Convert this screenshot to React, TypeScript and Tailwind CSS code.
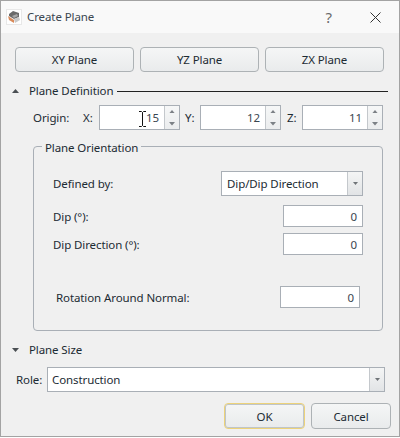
const font = { fontFamily: '"Noto Sans", sans-serif' };

function Arrow({ up, color = "#5f6468", w = 4 }: { up?: boolean; color?: string; w?: number }) {
  return (
    <svg width={w * 2 + 1} height={w + 1} viewBox={`0 0 ${w * 2 + 1} ${w + 1}`} className="block">
      <path d={up ? `M0 ${w + 1}L${w + 0.5} 0L${w * 2 + 1} ${w + 1}Z` : `M0 0L${w + 0.5} ${w + 1}L${w * 2 + 1} 0Z`} fill={color} />
    </svg>
  );
}

function Btn({ children, w, extra = "", h = "h-[25px]" }: { children: string; w: string; extra?: string; h?: string }) {
  return (
    <div className={`${w} ${h} ${extra} flex items-center justify-center pt-[1px] rounded-[4px] border border-[#adb2b5] bg-gradient-to-b from-[#f5f6f6] to-[#e9ebec] text-[11.5px] tracking-[-0.1px] text-[#1c2b33]`}>
      {children}
    </div>
  );
}

function Spin({ value, w }: { value: string; w: string }) {
  return (
    <div className={`${w} h-[25px] flex border border-[#a9afb6] bg-white`}>
      <div className="flex-1 flex items-center justify-end pr-[5px] pt-[1px] text-[11.5px] tracking-[-0.1px] text-[#3a4650]">{value}</div>
      <div className="w-[15px] border-l border-[#c4c8cc] bg-gradient-to-b from-[#f6f7f7] to-[#ebedee] flex flex-col items-center justify-center gap-[9px]">
        <Arrow up w={2.5} color="#7c8186" />
        <Arrow w={2.5} color="#7c8186" />
      </div>
    </div>
  );
}

function Num({ w }: { w: string }) {
  return (
    <div className={`${w} h-[22px] border border-[#a9afb6] bg-white flex items-center justify-end pr-[5px] pt-[2px] text-[11.5px] tracking-[-0.1px] text-[#3a4650]`}>0</div>
  );
}

function Combo({ value, w, pl }: { value: string; w: string; pl: string }) {
  return (
    <div className={`${w} h-[25px] flex border border-[#a9afb6] bg-white`}>
      <div className={`flex-1 flex items-center ${pl} pt-[1px] text-[11.5px] tracking-[-0.1px] text-[#1c2b33]`}>{value}</div>
      <div className="w-[15px] border-l border-[#c4c8cc] bg-gradient-to-b from-[#f4f5f5] to-[#e2e4e6] flex items-center justify-center">
        <Arrow w={2} color="#6f7478" />
      </div>
    </div>
  );
}

export default function App() {
  return (
    <div style={font} className="relative w-[400px] h-[438px] overflow-hidden bg-white">
      <div className="w-[400px] h-[437px] border border-[#a3a3a3] bg-[#f0f0f0] flex flex-col">
        <div className="h-[32px] bg-[#f9f9f9] flex items-center pl-[5px] pr-[18px] shrink-0">
          <div className="w-[16px] h-[16px] border border-[#e8e8e8] bg-white flex items-center justify-center">
            <svg width="14" height="14" viewBox="0 0 14 14">
              <path d="M2 4L6 1L12 3L12 7L7 9L2 6Z" fill="#6a6a6a" />
              <path d="M7 9L12 7L13 10L8 13Z" fill="#c9c9c9" />
              <path d="M1 6L7 10L7 13L2 10Z" fill="#d98a5a" />
              <path d="M5 6L10 4L11 6L7 8Z" fill="#a8a8a8" />
            </svg>
          </div>
          <span className="ml-[5px] text-[11.5px] tracking-[-0.1px] text-[#3a4650]">Create Plane</span>
          <span className="ml-auto text-[15px] text-[#6a6a6a] mr-[38px]">?</span>
          <svg width="11" height="11" viewBox="0 0 11 11">
            <path d="M0.5 0.5L10.5 10.5M10.5 0.5L0.5 10.5" stroke="#333" strokeWidth="1" />
          </svg>
        </div>

        <div className="flex gap-[6px] pl-[14px] mt-[14px]">
          <Btn w="w-[119px]">XY Plane</Btn>
          <Btn w="w-[119px]">YZ Plane</Btn>
          <Btn w="w-[119px]">ZX Plane</Btn>
        </div>

        <div className="flex items-center mt-[10px] pl-[11px] h-[18px] text-[11.5px] tracking-[-0.1px] text-[#1c2b33]">
          <Arrow up w={3} color="#4a4f53" />
          <span className="ml-[10px] w-[88px]">Plane Definition</span>
          <div className="w-[271px] h-px bg-[#222]" />
        </div>

        <div className="flex items-center mt-[5px] h-[25px] text-[11.5px] tracking-[-0.1px] text-[#1c2b33]">
          <span className="ml-[32px] w-[50px] pt-[1px]">Origin:</span>
          <span className="w-[16px] pt-[1px]">X:</span>
          <Spin value="15" w="w-[81px]" />
          <span className="ml-[5px] w-[15px] pt-[1px]">Y:</span>
          <Spin value="12" w="w-[81px]" />
          <span className="ml-[6px] w-[15px] pt-[1px]">Z:</span>
          <Spin value="11" w="w-[81px]" />
        </div>

        <div className="relative ml-[32px] mt-[16px] w-[350px] h-[185px] border border-[#a9afb6] rounded-[4px] shrink-0 text-[11.5px] tracking-[-0.1px] text-[#1c2b33]">
          <span className="absolute left-[8px] top-[-7px] px-[3px] bg-[#f0f0f0] leading-[16px]">Plane Orientation</span>
          <div className="flex items-center mt-[24px] h-[25px]">
            <span className="ml-[19px] w-[168px] pt-[1px]">Defined by:</span>
            <Combo value="Dip/Dip Direction" w="w-[142px]" pl="pl-[5px]" />
          </div>
          <div className="flex items-center mt-[9px] h-[22px]">
            <span className="ml-[19px] w-[230px] pt-[2px]">Dip (°):</span>
            <Num w="w-[80px]" />
          </div>
          <div className="flex items-center mt-[6px] h-[22px]">
            <span className="ml-[19px] w-[230px] pt-[2px]">Dip Direction (°):</span>
            <Num w="w-[80px]" />
          </div>
          <div className="flex items-center mt-[31px] h-[22px]">
            <span className="ml-[22px] w-[224px] pt-[2px]">Rotation Around Normal:</span>
            <Num w="w-[80px]" />
          </div>
        </div>

        <div className="flex items-center mt-[10px] pl-[11px] h-[18px] text-[11.5px] tracking-[-0.1px] text-[#1c2b33]">
          <Arrow w={3} color="#4a4f53" />
          <span className="ml-[10px]">Plane Size</span>
        </div>

        <div className="flex items-center mt-[8px] h-[25px] text-[11.5px] tracking-[-0.1px] text-[#1c2b33]">
          <span className="ml-[15px] w-[31px] pt-[1px]">Role:</span>
          <Combo value="Construction" w="w-[338px]" pl="pl-[4px]" />
        </div>

        <div className="flex justify-end gap-[6px] mt-[11px] pr-[8px]">
          <Btn w="w-[81px]" h="h-[26px]" extra="!border-[#ecd27a] shadow-[inset_0_0_0_1px_#bfc5c9]">OK</Btn>
          <Btn w="w-[80px]" h="h-[26px]">Cancel</Btn>
        </div>
      </div>

      <svg width="9" height="16" viewBox="0 0 9 16" className="absolute left-[138px] top-[111px]">
        <path d="M1 0.5H3.5L4.5 1.5L5.5 0.5H8M4.5 1.5V14.5M1 15.5H3.5L4.5 14.5L5.5 15.5H8" fill="none" stroke="#111" strokeWidth="1" />
      </svg>
    </div>
  );
}
